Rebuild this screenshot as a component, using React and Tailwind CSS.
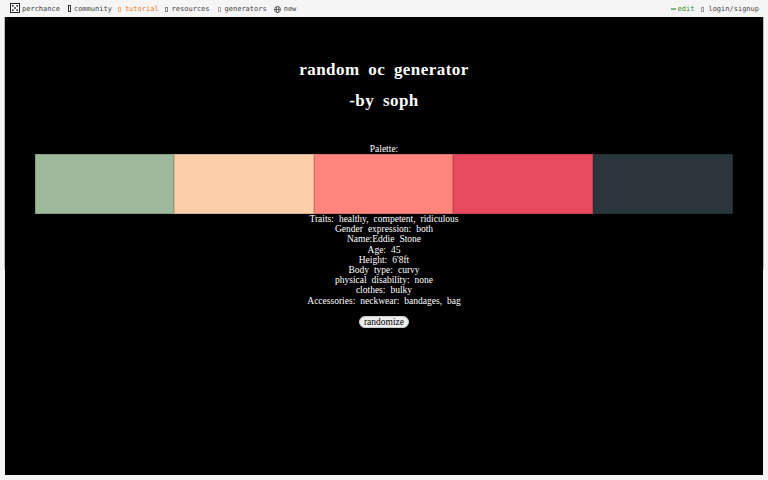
import React from 'react'

const colors = ['bg-[#9db89a]', 'bg-[#fecea8]', 'bg-[#ff847c]', 'bg-[#e84a5f]', 'bg-[#2a363b]']
const lines = [
  'Traits: healthy, competent, ridiculous',
  'Gender expression: both',
  'Name:Eddie Stone',
  'Age: 45',
  'Height: 6\'8ft',
  'Body type: curvy',
  'physical disability: none',
  'clothes: bulky',
  'Accessories: neckwear: bandages, bag',
]

function Dice() {
  return (
    <svg width="10" height="10" viewBox="0 0 10 10" className="ml-[1px] mr-[1px] mb-[2px]">
      <rect x="0.5" y="0.5" width="9" height="9" fill="#fff" stroke="#222" />
      <rect x="2" y="2" width="1.6" height="1.6" fill="#222" />
      <rect x="6.4" y="2" width="1.6" height="1.6" fill="#222" />
      <rect x="4.2" y="4.2" width="1.6" height="1.6" fill="#222" />
      <rect x="2" y="6.4" width="1.6" height="1.6" fill="#222" />
      <rect x="6.4" y="6.4" width="1.6" height="1.6" fill="#222" />
    </svg>
  )
}

function Globe() {
  return (
    <svg width="7" height="7" viewBox="0 0 7 7" fill="none" stroke="#333" strokeWidth="0.7" className="ml-[7px] mr-[3px]">
      <circle cx="3.5" cy="3.5" r="3" />
      <ellipse cx="3.5" cy="3.5" rx="1.3" ry="3" />
      <path d="M0.5 3.5h6" />
    </svg>
  )
}

function Tofu({ className }) {
  return <span className={`inline-block w-[3px] h-[5px] border-[0.5px] ${className}`} />
}

export default function App() {
  return (
    <div className="relative h-[480px] w-[768px] overflow-hidden bg-[#f5f5f5]">
      <nav className="h-[17px] pt-[1px] flex items-center justify-between pl-[9px] pr-[9px] font-['DejaVu_Sans_Mono',monospace] text-[7px] text-[#444]">
        <div className="flex items-center">
          <Dice />
          <span className="ml-[1px]">perchance</span>
          <span className="ml-[8px] inline-block w-[3px] h-[7px] border border-[#333] mb-[2px]" />
          <span className="ml-[3px]">community</span>
          <Tofu className="ml-[6px] mr-[4px] border-[#f0b080]" />
          <span className="text-[#e8792b]">tutorial</span>
          <Tofu className="ml-[6px] mr-[4px] border-[#888]" />
          <span>resources</span>
          <Tofu className="ml-[8px] mr-[4px] border-[#aaa]" />
          <span>generators</span>
          <Globe />
          <span>new</span>
        </div>
        <div className="flex items-center">
          <span className="w-[5px] h-[2px] bg-[#7fb77f] mr-[2px]" />
          <span className="text-[#2e8b2e]">edit</span>
          <Tofu className="ml-[7px] mr-[4px] border-[#999]" />
          <span>login/signup</span>
        </div>
      </nav>
      <main className="ml-[5px] w-[758px] h-[458px] bg-black text-white font-['Liberation_Serif',serif] text-center pt-[43px]">
        <h1 className="text-[17px] font-bold leading-[20px] tracking-[0.45px] [word-spacing:4px]">random oc generator</h1>
        <h1 className="mt-[11px] text-[17px] font-bold leading-[20px] tracking-[0.45px] [word-spacing:4px]">-by soph</h1>
        <div className="mt-[33px] text-[9.5px] leading-[10px]">Palette:</div>
        <div className="ml-[29.6px] mr-[30.4px] flex h-[60px]">
          {colors.map((c) => (
            <div key={c} className={`flex-1 border border-black/15 ${c}`} />
          ))}
        </div>
        <div className="text-[9.5px] leading-[10.2px] [word-spacing:2.6px]">
          {lines.map((l) => (
            <div key={l}>{l}</div>
          ))}
        </div>
        <button className="mt-[10px] h-[12px] px-[4px] rounded-full bg-[#efefef] text-black text-[9.5px] leading-[10px] border border-[#ccc]">randomize</button>
      </main>
      {/* thin frame edge on the upper part of the iframe */}
      <div className="absolute left-[4px] top-[17px] w-[1px] h-[253px] bg-[#bbb]" />
      <div className="absolute left-[763px] top-[17px] w-[1px] h-[253px] bg-[#bbb]" />
    </div>
  )
}
